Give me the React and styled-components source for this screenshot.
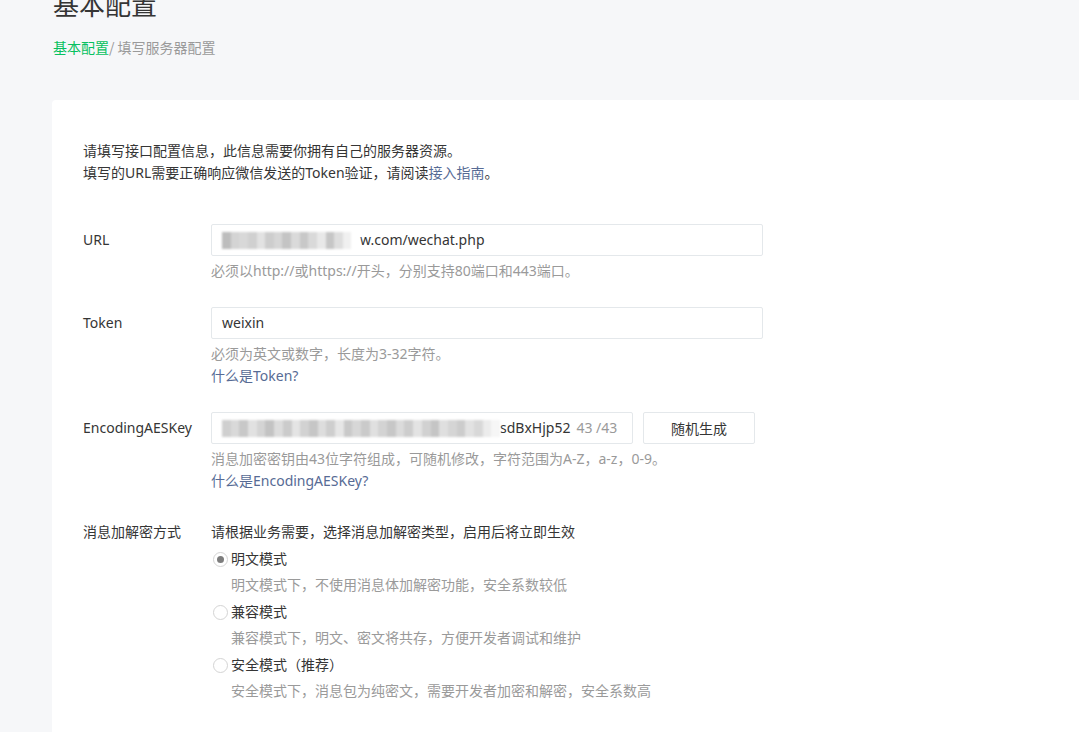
import React from "react";
import styled, { createGlobalStyle } from "styled-components";

const Global = createGlobalStyle`
  html, body { margin: 0; padding: 0; background: #f6f7f9; overflow: hidden; }
  body {
    font-family: "Noto Sans", "Noto Sans CJK SC", sans-serif;
    font-size: 14px;
    color: #353535;
  }
  * { box-sizing: border-box; }
`;

const Page = styled.div`
  display: flex;
  flex-direction: column;
  min-height: 732px;
  padding-left: 52px;
`;

const Title = styled.h2`
  margin: -14px 0 0 1px;
  font-size: 26px;
  line-height: 36px;
  font-weight: 400;
  color: #353535;
  font-family: "Noto Sans CJK SC", sans-serif;
`;

const Crumbs = styled.div`
  margin: 14px 0 0 1px;
  line-height: 22px;
  color: #9a9a9a;
  font-family: "Noto Sans CJK SC", sans-serif;
`;

const CrumbLink = styled.span`
  color: #07c160;
`;

const Card = styled.div`
  margin-top: 42px;
  background: #fff;
  border-top-left-radius: 4px;
  padding: 40px 31px 30px;
  flex: 1;
`;

const Intro = styled.div`
  line-height: 22px;
  margin-bottom: 40px;
`;

const Link = styled.a`
  color: #576b95;
  text-decoration: none;
  line-height: 22px;
`;

const Row = styled.div`
  display: flex;
  margin-bottom: ${(p) => p.$gap ?? 25}px;
`;

const Label = styled.div`
  width: 128px;
  flex: none;
  line-height: ${(p) => p.$lh ?? 32}px;
`;

const Field = styled.div`
  display: flex;
  flex-direction: column;
`;

const Controls = styled.div`
  display: flex;
  gap: 10px;
  margin-bottom: 4px;
`;

const Input = styled.div`
  width: ${(p) => p.$w}px;
  height: 32px;
  border: 1px solid #e4e8eb;
  border-radius: 2px;
  background: #fff;
  display: flex;
  align-items: center;
  padding: 0 10px;
  white-space: nowrap;
  overflow: hidden;
  line-height: 30px;
`;

const Counter = styled.span`
  color: #9a9a9a;
  margin-left: 6px;
`;

const Button = styled.button`
  width: 112px;
  height: 32px;
  border: 1px solid #e4e8eb;
  border-radius: 2px;
  background: #fff;
  color: #353535;
  font: inherit;
  font-family: "Noto Sans CJK SC", sans-serif;
  font-size: 14px;
`;

const Hint = styled.div`
  line-height: 22px;
  color: #9a9a9a;
`;

const Mosaic = styled.div`
  display: flex;
  height: 17px;
  width: ${(p) => p.$w}px;
  flex: none;
  filter: blur(1.2px);
  overflow: hidden;
`;

const Cell = styled.span`
  flex: 1;
  height: 100%;
`;

const Lead = styled.div`
  line-height: 22px;
  margin-bottom: 5px;
`;

const Option = styled.div`
  display: flex;
  flex-direction: column;
  margin-bottom: 5px;
`;

const OptionHead = styled.label`
  display: flex;
  align-items: center;
  gap: 3px;
  line-height: 22px;
  margin-bottom: 4px;
`;

const Radio = styled.span`
  width: 15px;
  height: 15px;
  margin-left: 2px;
  border-radius: 50%;
  border: 1px solid #d4d4d4;
  background: #fff;
  display: inline-flex;
  align-items: center;
  justify-content: center;
  &::after {
    content: "";
    width: 7px;
    height: 7px;
    border-radius: 50%;
    background: ${(p) => (p.$on ? "#7d7d7d" : "transparent")};
  }
`;

const OptionDesc = styled.div`
  line-height: 22px;
  color: #9a9a9a;
  padding-left: 20px;
`;

const shadesA = ["#bdbdbd", "#d4d4d4", "#d8d8d8", "#d0d0d0", "#e2e2e2", "#cdcdcd", "#d6d6d6", "#c4c4c4", "#dadada", "#c8c8c8", "#d9d9d9", "#e8e8e8", "#c6c6c6", "#dedede", "#f0f0f0", "#ffffff"];
const shadesB = ["#cfcfcf", "#d9d9d9", "#c8c8c8", "#e1e1e1", "#d4d4d4", "#c3c3c3", "#dcdcdc", "#cbcbcb", "#e4e4e4", "#d2d2d2", "#c6c6c6", "#dddddd", "#cecece", "#e6e6e6", "#c9c9c9", "#d7d7d7", "#cacaca", "#e0e0e0", "#d3d3d3", "#c7c7c7", "#dbdbdb", "#cdcdcd", "#e3e3e3", "#d1d1d1", "#c5c5c5", "#dfdfdf", "#d5d5d5", "#cccccc", "#e2e2e2", "#d8d8d8", "#ececec", "#f6f6f6"];

function Blur({ w, shades }) {
  return (
    <Mosaic $w={w}>
      {shades.map((c, i) => (
        <Cell key={i} style={{ background: c }} />
      ))}
    </Mosaic>
  );
}

const options = [
  { name: "明文模式", desc: "明文模式下，不使用消息体加解密功能，安全系数较低", on: true },
  { name: "兼容模式", desc: "兼容模式下，明文、密文将共存，方便开发者调试和维护" },
  { name: "安全模式（推荐）", desc: "安全模式下，消息包为纯密文，需要开发者加密和解密，安全系数高" },
];

export default function App() {
  return (
    <>
      <Global />
      <Page>
        <Title>基本配置</Title>
        <Crumbs>
          <CrumbLink>基本配置</CrumbLink>/ 填写服务器配置
        </Crumbs>
        <Card>
          <Intro>
            请填写接口配置信息，此信息需要你拥有自己的服务器资源。
            <br />
            填写的URL需要正确响应微信发送的Token验证，请阅读<Link>接入指南</Link>。
          </Intro>

          <Row>
            <Label>URL</Label>
            <Field>
              <Controls>
                <Input $w={552}>
                  <Blur w={138} shades={shadesA} />
                  w.com/wechat.php
                </Input>
              </Controls>
              <Hint>必须以http://或https://开头，分别支持80端口和443端口。</Hint>
            </Field>
          </Row>

          <Row>
            <Label>Token</Label>
            <Field>
              <Controls>
                <Input $w={552}>weixin</Input>
              </Controls>
              <Hint>必须为英文或数字，长度为3-32字符。</Hint>
              <Link>什么是Token?</Link>
            </Field>
          </Row>

          <Row $gap={29}>
            <Label>EncodingAESKey</Label>
            <Field>
              <Controls>
                <Input $w={422}>
                  <Blur w={278} shades={shadesB} />
                  sdBxHjp52<Counter>43 /43</Counter>
                </Input>
                <Button>随机生成</Button>
              </Controls>
              <Hint>消息加密密钥由43位字符组成，可随机修改，字符范围为A-Z，a-z，0-9。</Hint>
              <Link>什么是EncodingAESKey?</Link>
            </Field>
          </Row>

          <Row $gap={0}>
            <Label $lh={22}>消息加解密方式</Label>
            <Field>
              <Lead>请根据业务需要，选择消息加解密类型，启用后将立即生效</Lead>
              {options.map((o) => (
                <Option key={o.name}>
                  <OptionHead>
                    <Radio $on={o.on} />
                    {o.name}
                  </OptionHead>
                  <OptionDesc>{o.desc}</OptionDesc>
                </Option>
              ))}
            </Field>
          </Row>
        </Card>
      </Page>
    </>
  );
}
